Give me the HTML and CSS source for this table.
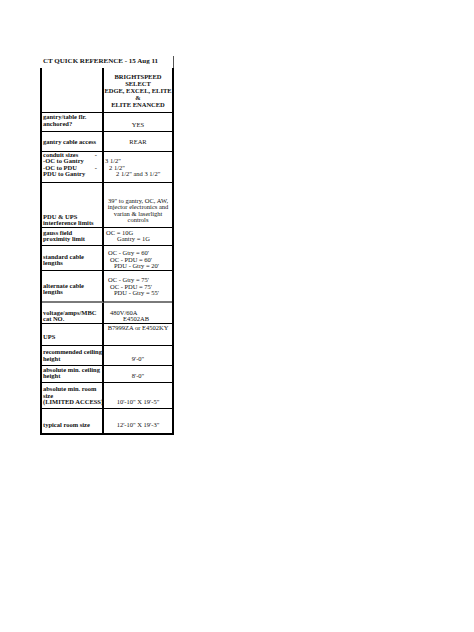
FILE: index.html
```html
<!DOCTYPE html>
<html>
<head>
<meta charset="utf-8">
<link rel="stylesheet" href="styles.css">
</head>
<body>
<div class="sheet">
  <div class="title">CT QUICK REFERENCE - 15 Aug 11</div>
  <div class="grid">
    <div class="cell c-l h1"></div>
    <div class="cell c-r h1 m bold center hdr">
      <div>BRIGHTSPEED</div>
      <div>SELECT</div>
      <div>EDGE, EXCEL, ELITE</div>
      <div>&amp;</div>
      <div>ELITE ENANCED</div>
    </div>

    <div class="cell c-l h2 t pt1 bold"><div>gantry/table flr.</div><div>anchored?</div></div>
    <div class="cell c-r h2 b pb2 center"><div>YES</div></div>

    <div class="cell c-l h3 b pb5 bold"><div>gantry cable access</div></div>
    <div class="cell c-r h3 b pb5 center"><div>REAR</div></div>

    <div class="cell c-l h4 b pb4 bold">
      <div class="split"><span>conduit sizes</span><span class="dash">-</span></div>
      <div>-OC to Gantry</div>
      <div class="split"><span>-OC to PDU</span><span class="dash">-</span></div>
      <div>PDU to Gantry</div>
    </div>
    <div class="cell c-r h4 b pb4">
      <div class="i1">3 1/2"</div>
      <div class="i5">2 1/2"</div>
      <div class="i12">2 1/2" and 3 1/2"</div>
    </div>

    <div class="cell c-l h5 b pb0 bold"><div>PDU &amp; UPS</div><div>interference limits</div></div>
    <div class="cell c-r h5 b pb3 center">
      <div>39" to gantry, OC, AW,</div>
      <div>injector electronics and</div>
      <div>varian &amp; laserlight</div>
      <div>controls</div>
    </div>

    <div class="cell c-l h6 b pb2 bold"><div>gauss field</div><div>proximity limit</div></div>
    <div class="cell c-r h6 b pb2"><div class="i2">OC = 10G</div><div class="i13">Gantry = 1G</div></div>

    <div class="cell c-l h7 b pb3 bold"><div>standard cable</div><div>lengths</div></div>
    <div class="cell c-r h7 b pb0">
      <div class="i4">OC - Gtry = 60'</div>
      <div class="i6">OC - PDU = 60'</div>
      <div class="i10">PDU - Gtry = 20'</div>
    </div>

    <div class="cell c-l h8 gray b pb5 bold"><div>alternate cable</div><div>lengths</div></div>
    <div class="cell c-r h8 gray b pb4">
      <div class="i4">OC - Gtry = 75'</div>
      <div class="i6">OC - PDU = 75'</div>
      <div class="i10">PDU - Gtry = 55'</div>
    </div>

    <div class="cell c-l h9 b pb0 bold"><div>voltage/amps/MBC</div><div>cat NO.</div></div>
    <div class="cell c-r h9 b pb0"><div class="i6">480V/60A</div><div class="i19">E4502AB</div></div>

    <div class="cell c-l h10 b pb4 bold"><div>UPS</div></div>
    <div class="cell c-r h10 t pt1 center"><div>B7999ZA or E4502KY</div></div>

    <div class="cell c-l h11 t pt3 bold"><div>recommended ceiling</div><div>height</div></div>
    <div class="cell c-r h11 b pb2 center"><div>9'-0"</div></div>

    <div class="cell c-l h12 b pb2 bold"><div>absolute min. ceiling</div><div>height</div></div>
    <div class="cell c-r h12 b pb2 center"><div>8'-0"</div></div>

    <div class="cell c-l h13 b pb2 bold"><div>absolute min. room</div><div>size</div><div>(LIMITED ACCESS)</div></div>
    <div class="cell c-r h13 b pb2 center"><div>10'-10" X 19'-5"</div></div>

    <div class="cell c-l h14 last b pb4 bold"><div>typical room size</div></div>
    <div class="cell c-r h14 last b pb4 center"><div>12'-10" X 19'-3"</div></div>
  </div>
</div>
</body>
</html>
```

FILE: styles.css
```css
html, body {
  margin: 0;
  padding: 0;
  background: #fff;
}

.sheet {
  padding: 56px 0 0 40px;
  font-family: "Liberation Serif", "Times New Roman", serif;
  color: #111;
}

.title {
  width: 134px;
  height: 12px;
  box-sizing: border-box;
  border-right: 1px solid #555;
  padding-left: 3px;
  font-size: 7px;
  line-height: 11px;
  font-weight: bold;
  white-space: nowrap;
}

.grid {
  width: 134px;
  box-sizing: border-box;
  display: grid;
  grid-template-columns: 62px 68px;
  border-left: 2px solid #000;
  border-right: 2px solid #000;
  border-bottom: 2px solid #000;
}

.cell {
  box-sizing: border-box;
  display: flex;
  flex-direction: column;
  font-size: 6.5px;
  line-height: 6.6px;
  white-space: nowrap;
  overflow: hidden;
  border-bottom: 1px solid #000;
}

.cell.last { border-bottom: none; }
.cell.gray { border-bottom: 2px solid #7a7a7a; }

.c-l {
  border-right: 2px solid #000;
  padding-left: 1px;
}

.c-r { padding-left: 0; }

.bold { font-weight: bold; }
.center { text-align: center; }
.hdr { line-height: 7px; }

.t { justify-content: flex-start; }
.m { justify-content: center; }
.b { justify-content: flex-end; }

.pt1 { padding-top: 1px; }
.pt3 { padding-top: 3px; }
.pb0 { padding-bottom: 0; }
.pb2 { padding-bottom: 2px; }
.pb3 { padding-bottom: 3px; }
.pb4 { padding-bottom: 4px; }
.pb5 { padding-bottom: 5px; }

.h1 { height: 45px; }
.h2 { height: 19px; }
.h3 { height: 20px; }
.h4 { height: 31px; }
.h5 { height: 45px; }
.h6 { height: 18px; }
.h7 { height: 25px; }
.h8 { height: 32px; }
.h9 { height: 21px; }
.h10 { height: 22px; }
.h11 { height: 20px; }
.h12 { height: 17px; }
.h13 { height: 26px; }
.h14 { height: 24px; }

.split {
  display: flex;
  justify-content: space-between;
}
.dash { margin-right: 5px; }

.i1 { padding-left: 1px; }
.i2 { padding-left: 2px; }
.i4 { padding-left: 4px; }
.i5 { padding-left: 5px; }
.i6 { padding-left: 6px; }
.i10 { padding-left: 10px; }
.i12 { padding-left: 12px; }
.i13 { padding-left: 13px; }
.i19 { padding-left: 19px; }
```
